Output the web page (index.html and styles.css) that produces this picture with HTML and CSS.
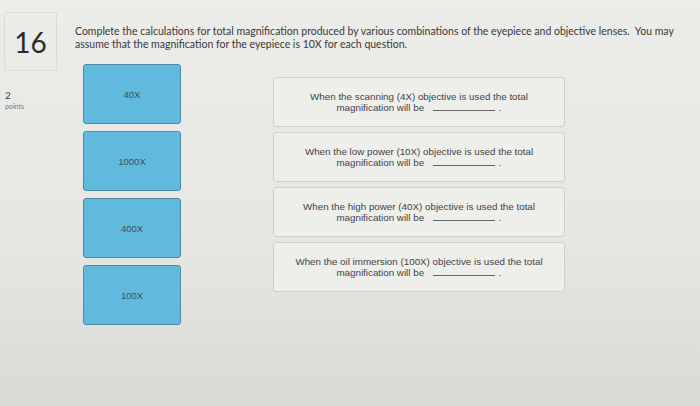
FILE: index.html
```html
<!DOCTYPE html>
<html lang="en">
<head>
    <meta charset="UTF-8">
    <meta name="viewport" content="width=device-width, initial-scale=1.0">
    <title>Question 16</title>
    <link rel="stylesheet" href="styles.css">
</head>
<body>
    <div class="question">
        <!-- Question number and points -->
        <div class="side">
            <div class="num-box">16</div>
            <div class="points">
                <div class="points-value">2</div>
                <div class="points-label">points</div>
            </div>
        </div>

        <div class="main">
            <p class="prompt">Complete the calculations for total magnification produced by various combinations of the eyepiece and objective lenses.&nbsp; You may<br>assume that the magnification for the eyepiece is 10X for each question.</p>

            <div class="matching">
                <!-- Draggable answer tiles -->
                <div class="tiles">
                    <div class="tile">40X</div>
                    <div class="tile">1000X</div>
                    <div class="tile">400X</div>
                    <div class="tile">100X</div>
                </div>

                <!-- Drop targets -->
                <div class="targets">
                    <div class="target">
                        <p>When the scanning (4X) objective is used the total<br>magnification will be <span class="blank"></span>.</p>
                    </div>
                    <div class="target">
                        <p>When the low power (10X) objective is used the total<br>magnification will be <span class="blank"></span>.</p>
                    </div>
                    <div class="target">
                        <p>When the high power (40X) objective is used the total<br>magnification will be <span class="blank"></span>.</p>
                    </div>
                    <div class="target">
                        <p>When the oil immersion (100X) objective is used the total<br>magnification will be <span class="blank"></span>.</p>
                    </div>
                </div>
            </div>
        </div>
    </div>
</body>
</html>
```

FILE: styles.css
```css
body {
    margin: 0;
    height: 406px;
    overflow: hidden;
    font-family: "Liberation Sans", Arial, sans-serif;
    color: #3a3a3a;
    background: linear-gradient(to bottom, #ecece9 0%, #e6e6e2 60%, #dad9d5 100%);
}
.question {
    display: flex;
    padding: 12px 0 0 4px;
}
.side {
    width: 53px;
}
.num-box {
    height: 59px;
    border: 1px solid #dcdcd8;
    border-radius: 2px;
    display: flex;
    align-items: center;
    justify-content: center;
    font-family: Lato, "Liberation Sans", sans-serif;
    font-size: 28px;
    color: #2a2a2a;
    box-sizing: border-box;
}
.points {
    margin-top: 19px;
    padding-left: 1px;
    font-family: Lato, "Liberation Sans", sans-serif;
}
.points-value {
    font-size: 10px;
    line-height: 11px;
    color: #444;
}
.points-label {
    font-size: 7px;
    line-height: 10px;
    color: #777;
}
.main {
    margin-left: 18px;
}
.prompt {
    margin: 13px 0 0;
    white-space: nowrap;
    font-family: Lato, "Liberation Sans", sans-serif;
    font-size: 10.5px;
    line-height: 13px;
    color: #3a3a3a;
}
.matching {
    display: flex;
    margin-top: 13px;
    margin-left: 8px;
}
.tiles {
    display: flex;
    flex-direction: column;
    gap: 7px;
}
.tile {
    width: 98px;
    height: 60px;
    box-sizing: border-box;
    border: 1px solid #4f8aa3;
    border-radius: 3px;
    background-color: #5fbadd;
    display: flex;
    align-items: center;
    justify-content: center;
    font-size: 9.5px;
    color: #3e4f58;
}
.targets {
    display: flex;
    flex-direction: column;
    gap: 5px;
    margin-top: 13px;
    margin-left: 92px;
}
.target {
    width: 292px;
    height: 50px;
    box-sizing: border-box;
    border: 1px solid #cfcfcb;
    border-radius: 3px;
    background-color: #eeeeeb;
    display: flex;
    align-items: center;
    justify-content: center;
    text-align: center;
    font-size: 9.8px;
    line-height: 11px;
    color: #444;
}
.target p {
    margin: 0;
    white-space: nowrap;
}
.blank {
    display: inline-block;
    width: 62px;
    margin: 0 4px 0 6px;
    border-bottom: 1px solid #666;
    vertical-align: 0;
}
```
